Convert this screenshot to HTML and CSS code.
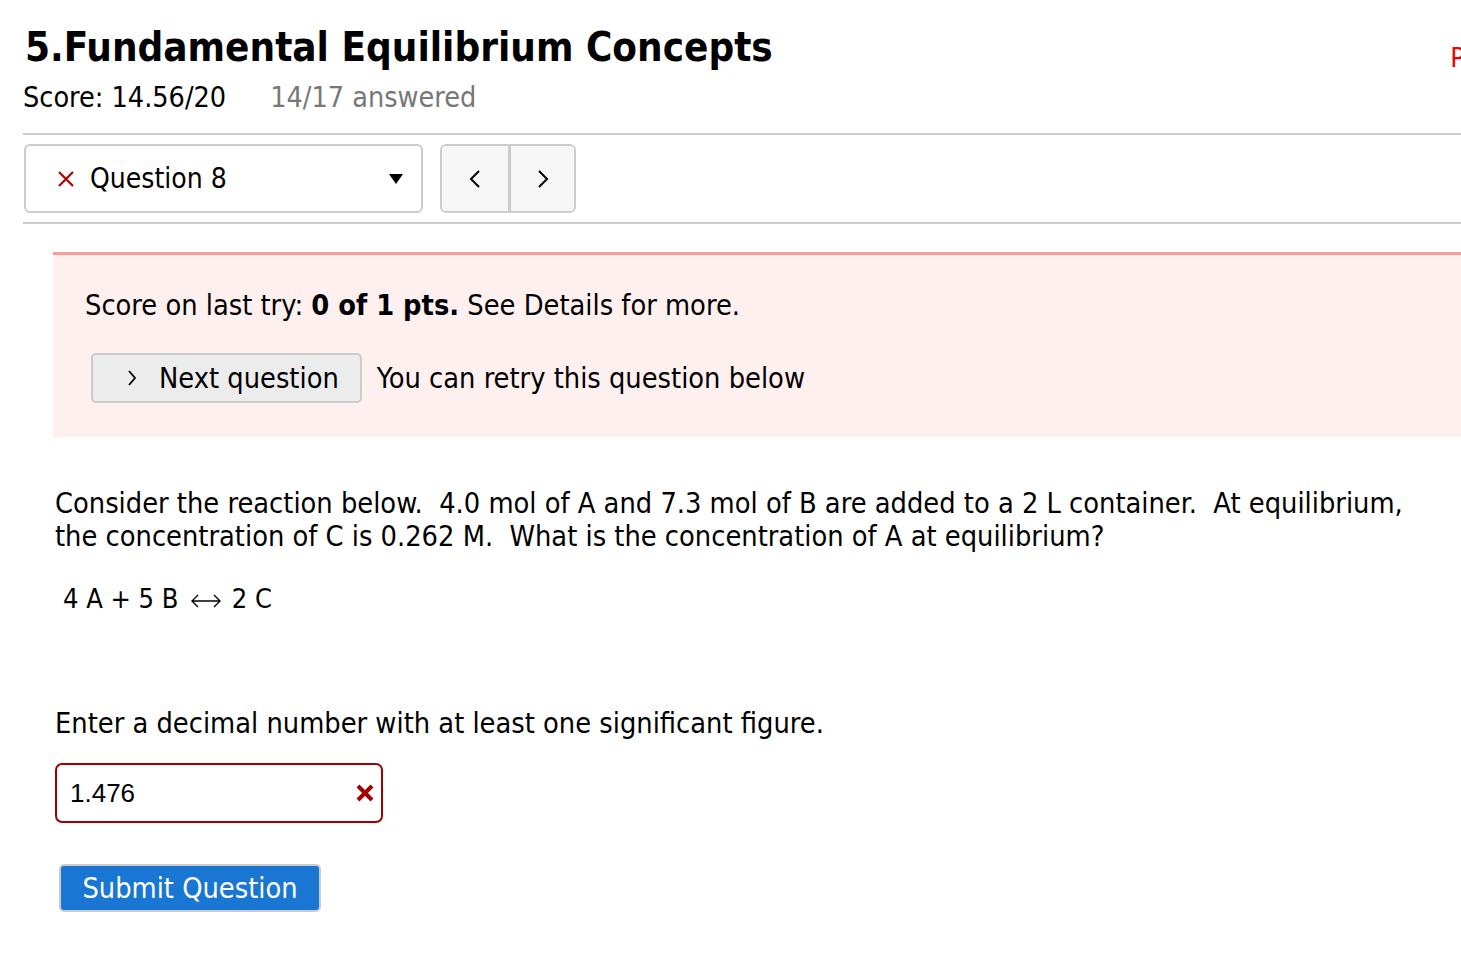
FILE: index.html
```html
<!DOCTYPE html>
<html lang="en">
<head>
<meta charset="utf-8">
<title>5.Fundamental Equilibrium Concepts</title>
<link rel="stylesheet" href="styles.css">
</head>
<body>
<div class="page">
  <header class="head">
    <div class="head-main">
      <h1 class="title">5.Fundamental Equilibrium Concepts</h1>
      <div class="scoreline">
        <span class="score">Score: 14.56/20</span>
        <span class="answered">14/17 answered</span>
      </div>
    </div>
    <span class="pts">P</span>
  </header>

  <nav class="navbar">
    <div class="qselect">
      <svg class="qx" viewBox="0 0 20 20" width="20" height="20"><path d="M3 3 L17 17 M17 3 L3 17" stroke="#b00000" stroke-width="2.2" fill="none"/></svg>
      <span class="qlabel">Question 8</span>
      <svg class="caret" viewBox="0 0 14 10" width="14" height="10"><path d="M0 0 H14 L7 10 Z" fill="#000"/></svg>
    </div>
    <div class="navbtns">
      <button class="navbtn" type="button" aria-label="Previous">
        <svg viewBox="0 0 12 20" width="12" height="20"><path d="M10 2 L2 10 L10 18" stroke="#000" stroke-width="2" fill="none"/></svg>
      </button>
      <button class="navbtn" type="button" aria-label="Next">
        <svg viewBox="0 0 12 20" width="12" height="20"><path d="M2 2 L10 10 L2 18" stroke="#000" stroke-width="2" fill="none"/></svg>
      </button>
    </div>
  </nav>

  <section class="content">
    <div class="alert">
      <p class="alert-score">Score on last try: <b>0 of 1 pts.</b> See Details for more.</p>
      <div class="alert-actions">
        <button class="nextq" type="button">
          <svg viewBox="0 0 10 18" width="10" height="18"><path d="M2 2 L8 9 L2 16" stroke="#000" stroke-width="1.8" fill="none"/></svg>
          Next question
        </button>
        <span>You can retry this question below</span>
      </div>
    </div>

    <div class="question">
      <p class="qtext">Consider the reaction below.&nbsp; 4.0 mol of A and 7.3 mol of B are added to a 2 L container.&nbsp; At equilibrium, the concentration of C is 0.262 M.&nbsp; What is the concentration of A at equilibrium?</p>
      <p class="equation">4 A + 5 B <svg class="arrow" viewBox="0 0 32 16" width="32" height="16"><path d="M2 8 H30 M8 2 L2 8 L8 14 M24 2 L30 8 L24 14" stroke="#000" stroke-width="1.4" fill="none"/></svg> 2 C</p>
      <p class="prompt">Enter a decimal number with at least one significant figure.</p>
      <div class="answer">
        <span class="answer-val">1.476</span>
        <svg class="answer-x" viewBox="0 0 20 20" width="20" height="20"><path d="M3 3 L17 17 M17 3 L3 17" stroke="#a00000" stroke-width="4" fill="none"/></svg>
      </div>
      <button class="submit" type="button">Submit Question</button>
    </div>
  </section>
</div>
</body>
</html>
```

FILE: styles.css
```css
html, body {
  margin: 0;
  padding: 0;
  background: #fff;
  overflow: hidden;
}
body {
  font-family: "DejaVu Sans Condensed", "DejaVu Sans", sans-serif;
  color: #000;
}
.page {
  padding-left: 23px;
}
.head {
  display: flex;
  justify-content: space-between;
  align-items: flex-start;
  width: 1442px;
  padding-top: 22px;
  padding-bottom: 18px;
  border-bottom: 2px solid #ccc;
}
.title {
  margin: 0 0 0 2px;
  font-size: 40px;
  line-height: 50px;
  font-weight: bold;
}
.scoreline {
  display: flex;
  gap: 44px;
  font-size: 28.5px;
  line-height: 34px;
  margin-top: 9px;
}
.answered { color: #777; }
.pts {
  color: #e00;
  font-size: 27px;
  line-height: 34px;
  margin-top: 19px;
}
.navbar {
  display: flex;
  gap: 17px;
  padding: 9px 0 9px 1px;
  border-bottom: 2px solid #ccc;
}
.qselect {
  box-sizing: border-box;
  width: 399px;
  height: 69px;
  border: 2px solid #ccc;
  border-radius: 6px;
  display: flex;
  align-items: center;
  padding-left: 30px;
  padding-right: 18px;
  font-size: 28px;
}
.qx { margin-right: 14px; }
.qlabel { flex: 1; }
.navbtns {
  display: flex;
  border: 2px solid #ccc;
  border-radius: 6px;
  overflow: hidden;
  height: 69px;
  box-sizing: border-box;
}
.navbtn {
  width: 66px;
  background: #f6f6f6;
  border: none;
  margin: 0;
  padding: 0;
  display: flex;
  align-items: center;
  justify-content: center;
}
.navbtn + .navbtn { border-left: 3px solid #ccc; }
.content {
  padding-left: 30px;
  padding-top: 28px;
}
.alert {
  background: #fff0f0;
  border-top: 3px solid #ff9999;
  padding: 32px 32px 34px;
}
.alert-score {
  margin: 0 0 30px;
  font-size: 28.7px;
  line-height: 36px;
}
.alert-actions {
  display: flex;
  align-items: center;
  gap: 15px;
  font-size: 28.7px;
  padding-left: 6px;
}
.nextq {
  font: inherit;
  font-size: 28.7px;
  display: flex;
  align-items: center;
  gap: 22px;
  height: 50px;
  box-sizing: border-box;
  padding: 0 21px 0 34px;
  background: #ececec;
  border: 2px solid #ccc;
  border-radius: 5px;
  color: #000;
}
.question {
  padding-left: 2px;
  padding-top: 50px;
}
.qtext {
  margin: 0;
  font-size: 28.7px;
  line-height: 33px;
  width: 1380px;
}
.equation {
  margin: 28px 0 0 8px;
  font-size: 27px;
  line-height: 36px;
}
.arrow {
  vertical-align: -1px;
  margin: 0 2px 0 4px;
}
.prompt {
  margin: 88px 0 0;
  font-size: 28.7px;
  line-height: 36px;
}
.answer {
  margin-top: 22px;
  box-sizing: border-box;
  width: 328px;
  height: 60px;
  border: 2px solid #a00000;
  border-radius: 7px;
  display: flex;
  align-items: center;
  padding: 0 6px 0 13px;
  font-family: "Liberation Sans", Arial, sans-serif;
  font-size: 26px;
}
.answer-val { flex: 1; }
.submit {
  margin: 41px 0 0 4px;
  font: inherit;
  font-size: 28.7px;
  color: #fff;
  background: #1976d2;
  border: 2px solid #ccc;
  border-radius: 5px;
  height: 48px;
  width: 262px;
  padding: 0;
}
```
